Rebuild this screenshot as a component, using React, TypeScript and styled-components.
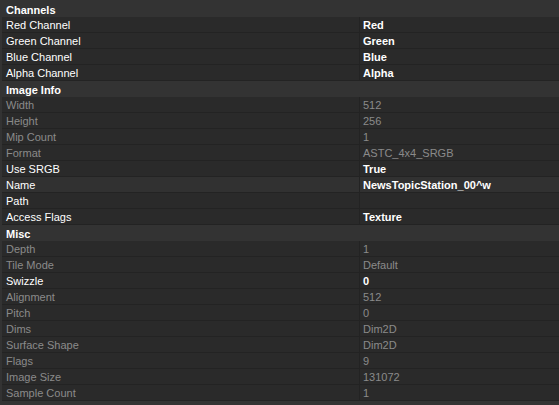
import React from "react";
import styled, { createGlobalStyle } from "styled-components";

const Global = createGlobalStyle`
  html, body { margin: 0; padding: 0; background: #333333; }
  body { font-family: "Liberation Sans", Arial, sans-serif; font-size: 11px; }
`;

const Panel = styled.div`
  width: 559px;
  height: 405px;
  background: #333333;
  display: flex;
  flex-direction: column;
  padding-top: 1px;
  box-sizing: border-box;
  overflow: hidden;
`;

const Header = styled.div`
  height: 16px;
  line-height: 18px;
  padding-left: 6px;
  color: #ffffff;
  font-weight: bold;
  overflow: hidden;
`;

const Row = styled.div<{ $hl?: boolean }>`
  margin-left: 2px;
  height: 15px;
  display: grid;
  grid-template-columns: 357px 1px 1fr;
  background: ${(p) => (p.$hl ? "#313131" : "#2a2a2a")};
  border-bottom: 1px solid #232323;
  overflow: hidden;
`;

const Label = styled.div<{ $dim?: boolean }>`
  padding-left: 4px;
  line-height: 17px;
  color: ${(p) => (p.$dim ? "#8a8a8a" : "#ffffff")};
  white-space: nowrap;
`;

const Divider = styled.div`
  background: #232323;
`;

const Value = styled.div<{ $dim?: boolean; $bold?: boolean }>`
  padding-left: 3px;
  line-height: 17px;
  color: ${(p) => (p.$dim ? "#8a8a8a" : "#ffffff")};
  font-weight: ${(p) => (p.$bold ? "bold" : "normal")};
  white-space: nowrap;
`;

type Item = { label: string; value: string; dim?: boolean; hl?: boolean };
type Section = { title: string; items: Item[] };

const sections: Section[] = [
  {
    title: "Channels",
    items: [
      { label: "Red Channel", value: "Red" },
      { label: "Green Channel", value: "Green" },
      { label: "Blue Channel", value: "Blue" },
      { label: "Alpha Channel", value: "Alpha" },
    ],
  },
  {
    title: "Image Info",
    items: [
      { label: "Width", value: "512", dim: true },
      { label: "Height", value: "256", dim: true },
      { label: "Mip Count", value: "1", dim: true },
      { label: "Format", value: "ASTC_4x4_SRGB", dim: true },
      { label: "Use SRGB", value: "True" },
      { label: "Name", value: "NewsTopicStation_00^w", hl: true },
      { label: "Path", value: "" },
      { label: "Access Flags", value: "Texture" },
    ],
  },
  {
    title: "Misc",
    items: [
      { label: "Depth", value: "1", dim: true },
      { label: "Tile Mode", value: "Default", dim: true },
      { label: "Swizzle", value: "0" },
      { label: "Alignment", value: "512", dim: true },
      { label: "Pitch", value: "0", dim: true },
      { label: "Dims", value: "Dim2D", dim: true },
      { label: "Surface Shape", value: "Dim2D", dim: true },
      { label: "Flags", value: "9", dim: true },
      { label: "Image Size", value: "131072", dim: true },
      { label: "Sample Count", value: "1", dim: true },
    ],
  },
];

export default function App() {
  return (
    <>
      <Global />
      <Panel>
        {sections.map((s) => (
          <React.Fragment key={s.title}>
            <Header>{s.title}</Header>
            {s.items.map((it) => (
              <Row key={it.label} $hl={it.hl}>
                <Label $dim={it.dim}>{it.label}</Label>
                <Divider />
                <Value $dim={it.dim} $bold={!it.dim}>
                  {it.value}
                </Value>
              </Row>
            ))}
          </React.Fragment>
        ))}
      </Panel>
    </>
  );
}
